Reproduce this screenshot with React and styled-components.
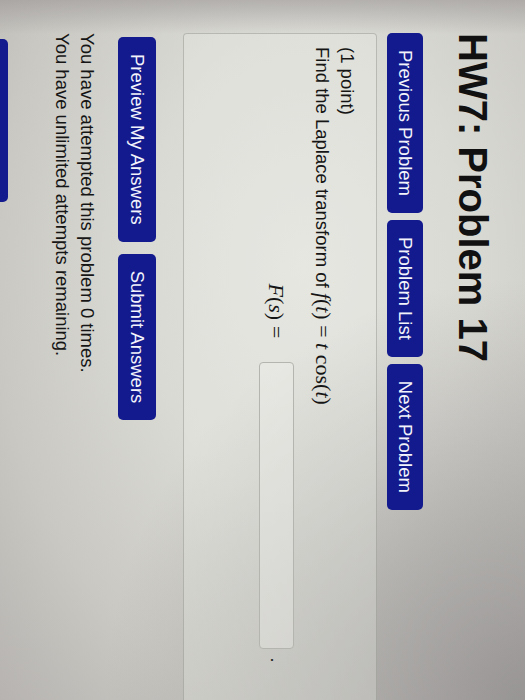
import React from "react";
import styled, { createGlobalStyle } from "styled-components";

const GlobalStyle = createGlobalStyle`
  html, body {
    margin: 0;
    padding: 0;
    width: 525px;
    height: 700px;
    overflow: hidden;
  }

  body {
    font-family: "Liberation Sans", Arial, Helvetica, sans-serif;
    background:
      linear-gradient(to bottom, rgba(150, 145, 146, 0.55) 0, rgba(150, 145, 146, 0) 34px),
      radial-gradient(circle at 100% 100%, rgba(135, 131, 133, 0.7) 0%, rgba(135, 131, 133, 0) 48%),
      radial-gradient(ellipse at 58% 38%, #e3e3de 0%, #dadad4 38%, #c9c8c2 72%, #b6b3b0 100%);
  }
`;

/* the photo shows the page turned on its side, so the page is laid out upright and turned */
const Stage = styled.main`
  width: 700px;
  height: 525px;
  box-sizing: border-box;
  padding: 32px 0 0 33px;
  overflow: hidden;
  color: #151515;
  transform-origin: 0 0;
  transform: translateX(525px) rotate(90deg);
`;

const Title = styled.h1`
  margin: 0;
  font-size: 40px;
  line-height: 40px;
  font-weight: 700;
  color: #111;
`;

const ButtonRow = styled.nav`
  display: flex;
  gap: ${({ $gap }) => $gap}px;
  margin-top: ${({ $top }) => $top}px;
  padding-left: ${({ $indent = 0 }) => $indent}px;
`;

const Button = styled.button`
  height: ${({ $tall }) => ($tall ? 38 : 36)}px;
  padding: 0 17px;
  border: none;
  border-radius: 5px;
  background: #121a8d;
  color: #f3f3fb;
  font-family: inherit;
  font-size: 18.5px;
  white-space: nowrap;
  cursor: pointer;
`;

/* only the top edge of this one shows in the photo */
const PeekButton = styled(Button)`
  width: 163px;
`;

const ProblemBox = styled.section`
  width: 880px;
  height: 194px;
  box-sizing: border-box;
  margin-top: 10px;
  padding: 17px 13px 0;
  border: 1px solid rgba(135, 140, 130, 0.45);
  border-radius: 4px;
  background: rgba(238, 240, 232, 0.28);
`;

const Line = styled.p`
  margin: 0;
  font-size: 18.5px;
  line-height: ${({ $lh = 24 }) => $lh}px;
`;

const Serif = styled.span`
  font-family: "Liberation Serif", "Times New Roman", serif;
  font-size: ${({ $size = 21 }) => $size}px;
`;

const Var = styled.i`
  font-style: italic;
`;

const MathRow = styled.div`
  display: flex;
  justify-content: center;
  align-items: center;
  height: 35px;
  margin-top: 16px;
`;

const Equals = styled.span`
  margin-left: 6px;
`;

const AnswerInput = styled.input`
  width: 287px;
  height: 35px;
  box-sizing: border-box;
  margin-left: 23px;
  border: 1px solid #b3b5ae;
  border-radius: 4px;
  background: rgba(242, 242, 237, 0.35);
`;

const Period = styled.span`
  margin-left: 9px;
  font-size: 18px;
`;

const Status = styled.div`
  margin-top: 18px;
`;

export default function App() {
  return (
    <>
      <GlobalStyle />
      <Stage>
        <Title>HW7: Problem 17</Title>

        <ButtonRow $gap={7} $top={30}>
          <Button>Previous Problem</Button>
          <Button>Problem List</Button>
          <Button>Next Problem</Button>
        </ButtonRow>

        <ProblemBox>
          <Line>(1 point)</Line>
          <Line>
            Find the Laplace transform of{" "}
            <Serif $size={22}>
              <Var>f</Var>(<Var>t</Var>) = <Var>t</Var> cos(<Var>t</Var>)
            </Serif>
          </Line>
          <MathRow>
            <Serif $size={22}>
              <Var>F</Var>(<Var>s</Var>)<Equals>=</Equals>
            </Serif>
            <AnswerInput type="text" aria-label="F(s)" />
            <Period>.</Period>
          </MathRow>
        </ProblemBox>

        <ButtonRow $gap={12} $top={27} $indent={4}>
          <Button $tall>Preview My Answers</Button>
          <Button $tall>Submit Answers</Button>
        </ButtonRow>

        <Status>
          <Line $lh={25}>You have attempted this problem 0 times.</Line>
          <Line $lh={25}>You have unlimited attempts remaining.</Line>
        </Status>

        <ButtonRow $gap={0} $top={42} $indent={6}>
          <PeekButton $tall aria-label="Email Instructor" />
        </ButtonRow>
      </Stage>
    </>
  );
}
